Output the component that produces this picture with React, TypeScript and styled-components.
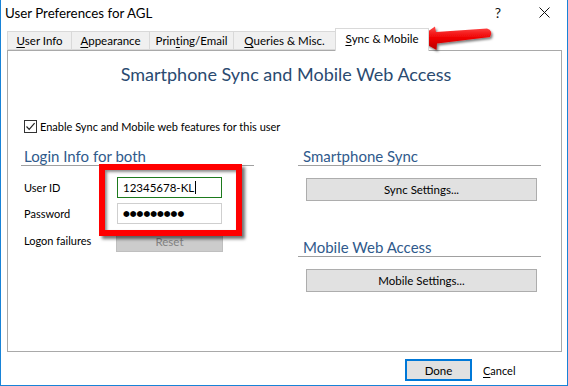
import React from "react";
import styled, { createGlobalStyle } from "styled-components";

const GlobalStyle = createGlobalStyle`
  html, body {
    margin: 0;
    padding: 0;
    background: #ffffff;
  }
  body {
    font-family: "Lato", "Noto Sans", sans-serif;
    font-size: 11px;
    color: #000;
  }
  * {
    box-sizing: border-box;
  }
`;

const Window = styled.div`
  position: relative;
  width: 568px;
  height: 386px;
  background: #fff;
  border: 1px solid #1883d7;
  border-top: none;
  display: flex;
  flex-direction: column;
  overflow: hidden;
`;

const TitleBar = styled.div`
  height: 25px;
  display: flex;
  align-items: center;
  padding-left: 4px;
`;

const Title = styled.div`
  flex: 1;
  font-size: 13.3px;
`;

const CaptionButton = styled.div`
  width: 46px;
  height: 25px;
  display: flex;
  align-items: center;
  justify-content: center;
  font-size: 14px;
  color: #111;
`;

const TabStrip = styled.div`
  height: 25px;
  display: flex;
  align-items: flex-end;
  padding-left: 6px;
`;

const Tab = styled.div<{ $width: number; $active?: boolean }>`
  width: ${(p) => p.$width}px;
  height: ${(p) => (p.$active ? 23 : 19)}px;
  margin-right: -1px;
  margin-bottom: ${(p) => (p.$active ? -1 : 0)}px;
  border: 1px solid #d9d9d9;
  border-bottom: ${(p) => (p.$active ? "none" : "1px solid #d9d9d9")};
  background: ${(p) => (p.$active ? "#fff" : "#f0f0f0")};
  position: relative;
  z-index: ${(p) => (p.$active ? 2 : 1)};
  display: flex;
  align-items: center;
  justify-content: center;
  padding-bottom: ${(p) => (p.$active ? 3 : 0)}px;
  font-size: 11.5px;
`;

const Key = styled.span`
  text-decoration: underline;
  text-underline-offset: 2px;
`;

const Panel = styled.div`
  margin-left: 6px;
  width: 555px;
  height: 302px;
  border: 1px solid #a9a9a9;
  padding-top: 12px;
`;

const Heading = styled.div`
  text-align: center;
  font-size: 18px;
  line-height: 22px;
  color: #2a4a70;
  padding-left: 3px;
`;

const CheckRow = styled.label`
  display: flex;
  align-items: center;
  gap: 3px;
  height: 13px;
  margin-top: 35px;
  padding-left: 16px;
`;

const CheckBox = styled.span`
  width: 13px;
  height: 13px;
  border: 1px solid #333;
  background: #fff;
  display: flex;
  align-items: center;
  justify-content: center;
`;

const Columns = styled.div`
  display: grid;
  grid-template-columns: 233px 243px;
  column-gap: 44px;
  padding-left: 13px;
  margin-top: 15px;
`;

const Column = styled.div`
  display: flex;
  flex-direction: column;
`;

const SectionTitle = styled.div<{ $indent: number; $gap?: number }>`
  font-size: 15px;
  line-height: 17px;
  color: #2f5a8c;
  padding-left: ${(p) => p.$indent}px;
  border-bottom: 1px solid #a0a0a0;
  margin-top: ${(p) => p.$gap ?? 0}px;
`;

const FormGrid = styled.div`
  display: grid;
  grid-template-columns: 96px 105px;
  grid-template-rows: 21px 21px 23px;
  row-gap: 5px;
  margin-top: 11px;
`;

const FieldLabel = styled.div`
  align-self: center;
  padding-left: 3px;
`;

const TextBox = styled.div<{ $focused?: boolean }>`
  border: 1px solid ${(p) => (p.$focused ? "#1d7a1d" : "#cfcfcf")};
  background: #fff;
  display: flex;
  align-items: center;
  padding-left: 5px;
  font-size: 11.5px;
`;

const Caret = styled.span`
  width: 1px;
  height: 13px;
  background: #000;
  margin-left: 1px;
`;

const Dots = styled.span`
  font-family: "DejaVu Sans", sans-serif;
  font-size: 7.8px;
  letter-spacing: 0;
`;

const Button = styled.div<{ $disabled?: boolean; $default?: boolean }>`
  display: flex;
  align-items: center;
  justify-content: center;
  background: ${(p) => (p.$disabled ? "#cccccc" : "#e1e1e1")};
  border: ${(p) =>
    p.$default ? "2px solid #0078d7" : p.$disabled ? "1px solid #bfbfbf" : "1px solid #adadad"};
  color: ${(p) => (p.$disabled ? "#838383" : "#000")};
  font-size: 11.5px;
`;

const ResetButton = styled(Button)`
  margin-top: 1px;
  margin-left: -1px;
  width: 107px;
`;

const WideButton = styled(Button)`
  margin-top: 12px;
  margin-left: 8px;
  width: 231px;
  height: 23px;
`;

const Footer = styled.div`
  display: flex;
  align-items: flex-start;
  padding-top: 7px;
  padding-left: 404px;
`;

const DoneButton = styled(Button)`
  width: 67px;
  height: 22px;
`;

const LinkButton = styled.div`
  margin-left: 11px;
  height: 22px;
  display: flex;
  align-items: center;
  font-size: 11px;
`;

const Highlight = styled.div`
  position: absolute;
  left: 98px;
  top: 164px;
  width: 143px;
  height: 72px;
  border: 6px solid #ff0000;
  box-shadow: 3px 3px 3px rgba(0, 0, 0, 0.55), inset 2px 2px 3px rgba(0, 0, 0, 0.45);
  pointer-events: none;
`;

const ArrowSvg = styled.svg`
  position: absolute;
  left: 410px;
  top: 22px;
  width: 90px;
  height: 34px;
  pointer-events: none;
`;

const tabs = [
  { key: "U", rest: "ser Info", width: 65 },
  { key: "A", rest: "ppearance", width: 79 },
  { pre: "Prin", key: "t", rest: "ing/Email", width: 85 },
  { key: "Q", rest: "ueries & Misc.", width: 103 },
];

export default function App() {
  return (
    <>
      <GlobalStyle />
      <Window>
        <TitleBar>
          <Title>User Preferences for AGL</Title>
          <CaptionButton>?</CaptionButton>
          <CaptionButton>
            <svg width="11" height="11" viewBox="0 0 11 11">
              <path d="M0.5 0.5 L10.5 10.5 M10.5 0.5 L0.5 10.5" stroke="#111" strokeWidth="1" />
            </svg>
          </CaptionButton>
        </TitleBar>

        <TabStrip>
          {tabs.map((t) => (
            <Tab key={t.key} $width={t.width}>
              {t.pre}
              <Key>{t.key}</Key>
              {t.rest}
            </Tab>
          ))}
          <Tab $width={94} $active>
            <Key>S</Key>ync &amp; Mobile
          </Tab>
        </TabStrip>

        <Panel>
          <Heading>Smartphone Sync and Mobile Web Access</Heading>

          <CheckRow>
            <CheckBox>
              <svg width="11" height="11" viewBox="0 0 11 11">
                <path d="M1.5 5.5 L4.2 8.3 L9.6 2.2" fill="none" stroke="#222" strokeWidth="1.2" />
              </svg>
            </CheckBox>
            Enable Sync and Mobile web features for this user
          </CheckRow>

          <Columns>
            <Column>
              <SectionTitle $indent={3}>Login Info for both</SectionTitle>
              <FormGrid>
                <FieldLabel>User ID</FieldLabel>
                <TextBox $focused>
                  12345678-KL
                  <Caret />
                </TextBox>
                <FieldLabel>Password</FieldLabel>
                <TextBox>
                  <Dots>●●●●●●●●●</Dots>
                </TextBox>
                <FieldLabel>Logon failures</FieldLabel>
                <ResetButton $disabled>Reset</ResetButton>
              </FormGrid>
            </Column>

            <Column>
              <SectionTitle $indent={5}>Smartphone Sync</SectionTitle>
              <WideButton>Sync Settings...</WideButton>
              <SectionTitle $indent={5} $gap={38}>
                Mobile Web Access
              </SectionTitle>
              <WideButton>Mobile Settings...</WideButton>
            </Column>
          </Columns>
        </Panel>

        <Footer>
          <DoneButton $default>Done</DoneButton>
          <LinkButton>
            <Key>C</Key>ancel
          </LinkButton>
        </Footer>

        <Highlight />

        <ArrowSvg viewBox="410 22 90 34">
          <defs>
            <linearGradient id="arrowFill" x1="0" y1="0" x2="0" y2="1">
              <stop offset="0" stopColor="#ff4a4a" />
              <stop offset="0.5" stopColor="#ee0000" />
              <stop offset="1" stopColor="#b80000" />
            </linearGradient>
            <filter id="arrowShadow" x="-20%" y="-30%" width="140%" height="170%">
              <feDropShadow dx="1.5" dy="2" stdDeviation="1.2" floodColor="#000" floodOpacity="0.5" />
            </filter>
          </defs>
          <path
            d="M416 39 L434 26.5 L435 32 L486 28.5 Q492.5 30.5 489 37 L436 43.5 L435.5 50 Z"
            fill="url(#arrowFill)"
            filter="url(#arrowShadow)"
          />
        </ArrowSvg>
      </Window>
    </>
  );
}
